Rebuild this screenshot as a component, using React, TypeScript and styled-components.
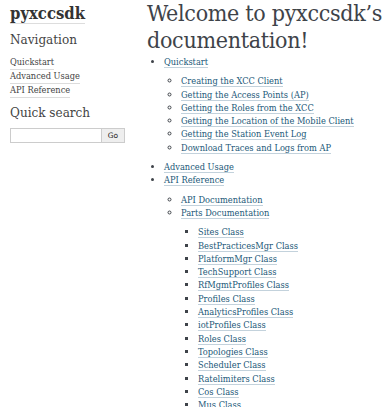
import styled, { createGlobalStyle } from "styled-components";

const GlobalStyle = createGlobalStyle`
  body {
    margin: 0;
    background: #ffffff;
    font-family: "DejaVu Serif Condensed", "DejaVu Serif", Georgia, serif;
    font-stretch: condensed;
    color: #3e4349;
  }
`;

const quickstart = [
  "Creating the XCC Client",
  "Getting the Access Points (AP)",
  "Getting the Roles from the XCC",
  "Getting the Location of the Mobile Client",
  "Getting the Station Event Log",
  "Download Traces and Logs from AP",
];

const classes = [
  "Sites Class",
  "BestPracticesMgr Class",
  "PlatformMgr Class",
  "TechSupport Class",
  "RfMgmtProfiles Class",
  "Profiles Class",
  "AnalyticsProfiles Class",
  "iotProfiles Class",
  "Roles Class",
  "Topologies Class",
  "Scheduler Class",
  "Ratelimiters Class",
  "Cos Class",
  "Mus Class",
];

export default function App() {
  return (
    <>
      <GlobalStyle />
      <Page>
        <Sidebar>
          <Logo href="#">pyxccsdk</Logo>
          <SideHeading>Navigation</SideHeading>
          <SideLinks>
            <SideLink href="#">Quickstart</SideLink>
            <SideLink href="#">Advanced Usage</SideLink>
            <SideLink href="#">API Reference</SideLink>
          </SideLinks>
          <SideHeading>Quick search</SideHeading>
          <SearchForm>
            <SearchInput type="text" />
            <GoButton type="button">Go</GoButton>
          </SearchForm>
        </Sidebar>
        <Main>
          <Title>Welcome to pyxccsdk’s documentation!</Title>
          <List $marker="disc">
            <li>
              <Link href="#">Quickstart</Link>
              <List $marker="circle" $nested>
                {quickstart.map((t) => (
                  <li key={t}>
                    <Link href="#">{t}</Link>
                  </li>
                ))}
              </List>
            </li>
            <li>
              <Link href="#">Advanced Usage</Link>
            </li>
            <li>
              <Link href="#">API Reference</Link>
              <List $marker="circle" $nested>
                <li>
                  <Link href="#">API Documentation</Link>
                </li>
                <li>
                  <Link href="#">Parts Documentation</Link>
                  <List $marker="square" $nested>
                    {classes.map((t) => (
                      <li key={t}>
                        <Link href="#">{t}</Link>
                      </li>
                    ))}
                  </List>
                </li>
              </List>
            </li>
          </List>
        </Main>
      </Page>
    </>
  );
}

const Page = styled.div`
  display: flex;
  align-items: flex-start;
`;

const Sidebar = styled.div`
  width: 137px;
  flex-shrink: 0;
  padding-left: 10px;
  display: flex;
  flex-direction: column;
  align-items: flex-start;
`;

const Logo = styled.a`
  margin-top: 4px;
  font-size: 16.5px;
  font-weight: bold;
  line-height: 19px;
  color: #333;
  text-decoration: none;
  border-bottom: 1px solid #ddd;
`;

const SideHeading = styled.h3`
  margin: 6px 0 5px;
  font-size: 13.4px;
  font-weight: normal;
  line-height: 20px;
  color: #444;
`;

const SideLinks = styled.div`
  display: flex;
  flex-direction: column;
  align-items: flex-start;
`;

const SideLink = styled.a`
  font-size: 9.2px;
  line-height: 14px;
  color: #444;
  text-decoration: none;
  border-bottom: 1px solid #dcdcdc;
  margin-bottom: -1px;
`;

const SearchForm = styled.div`
  display: flex;
`;

const SearchInput = styled.input`
  width: 92px;
  height: 15px;
  box-sizing: border-box;
  border: 1px solid #ccc;
  padding: 0 3px;
  margin: 0;
`;

const GoButton = styled.button`
  width: 23px;
  height: 15px;
  box-sizing: border-box;
  border: 1px solid #ccc;
  border-left: none;
  background: #eee;
  color: #222;
  font-family: "DejaVu Sans", sans-serif;
  font-size: 7.5px;
  padding: 0;
  margin: 0;
`;

const Main = styled.div`
  flex: 1;
  min-width: 0;
`;

const Title = styled.h1`
  margin: 0 0 1px;
  font-size: 23px;
  letter-spacing: -0.3px;
  font-weight: normal;
  line-height: 27px;
  color: #3e4349;
`;

const List = styled.ul<{ $marker: string; $nested?: boolean }>`
  list-style: ${({ $marker }) => $marker};
  margin: ${({ $nested }) => ($nested ? "6px 0" : "0")};
  padding-left: 17px;
  font-size: 9.2px;
  line-height: 13.3px;
  color: #3e4349;
`;

const Link = styled.a`
  color: #1a5878;
  text-decoration: none;
  border-bottom: 1px solid #c3d2dc;
`;
